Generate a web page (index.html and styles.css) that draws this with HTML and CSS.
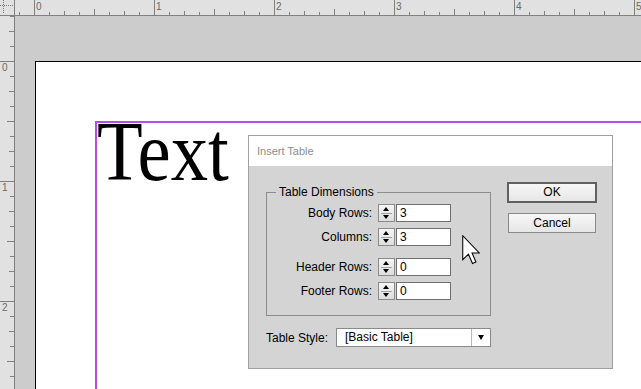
FILE: index.html
```html
<!DOCTYPE html>
<html>
<head>
<meta charset="UTF-8">
<title>Insert Table</title>
<link rel="stylesheet" href="styles.css">
</head>
<body>
  <div class="app">
    <div class="corner">
      <svg width="14" height="15" viewBox="0 0 14 15">
        <line x1="3.5" y1="0" x2="3.5" y2="14" stroke="#777" stroke-dasharray="1 1"/>
        <line x1="0" y1="5.5" x2="13" y2="5.5" stroke="#777" stroke-dasharray="1 1"/>
      </svg>
    </div>
    <div class="ruler ruler-top">
      <span>0</span><span>1</span><span>2</span><span>3</span><span>4</span><span>5</span>
    </div>
    <div class="ruler ruler-left">
      <span>0</span><span>1</span><span>2</span>
    </div>
    <div class="pasteboard">
      <div class="page">
        <div class="frame">
          <div class="frame-text">Text</div>
        </div>
      </div>
    </div>
  </div>

  <div class="dialog">
    <div class="dialog-title">Insert Table</div>
    <div class="dialog-body">
      <div class="left-col">
        <fieldset class="dims">
          <legend>Table Dimensions</legend>
          <div class="group">
            <div class="row">
              <label>Body Rows:</label>
              <span class="spin"></span>
              <span class="field">3</span>
            </div>
            <div class="row">
              <label>Columns:</label>
              <span class="spin"></span>
              <span class="field">3</span>
            </div>
          </div>
          <div class="group group-2">
            <div class="row">
              <label>Header Rows:</label>
              <span class="spin"></span>
              <span class="field">0</span>
            </div>
            <div class="row">
              <label>Footer Rows:</label>
              <span class="spin"></span>
              <span class="field">0</span>
            </div>
          </div>
        </fieldset>
        <div class="style-row">
          <label>Table Style:</label>
          <div class="select">
            <span class="select-value">[Basic Table]</span>
            <span class="select-arrow"></span>
          </div>
        </div>
      </div>
      <div class="buttons">
        <div class="btn btn-default">OK</div>
        <div class="btn">Cancel</div>
      </div>
    </div>
  </div>

  <svg class="cursor" width="18" height="30" viewBox="0 0 12 20">
    <polygon points="0.5,0.5 0.5,16.5 4.3,12.8 7,19 9.3,18 6.7,12 11.5,12" fill="#fff" stroke="#000" stroke-width="0.7" stroke-linejoin="miter"/>
  </svg>
</body>
</html>
```

FILE: styles.css
```css
body {
    margin: 0;
    width: 641px;
    height: 389px;
    overflow: hidden;
    font-family: "Liberation Sans", Arial, sans-serif;
    position: relative;
}

.app {
    display: grid;
    grid-template-columns: 15px 1fr;
    grid-template-rows: 16px 1fr;
    width: 641px;
    height: 389px;
}

.corner {
    background: #e1e1e1;
    border-right: 1px solid #808080;
    border-bottom: 1px solid #808080;
    box-sizing: border-box;
}
.corner svg {
    display: block;
}

.ruler {
    background-color: #e1e1e1;
    box-sizing: border-box;
    overflow: hidden;
    color: #6a6a6a;
    font-size: 10px;
    line-height: 12px;
}

/* ticks: 120px per inch, eighths every 15px */
.ruler-top {
    border-bottom: 1px solid #808080;
    display: flex;
    padding-left: 21px;
    background-image:
        linear-gradient(to right, #808080 0 1px, transparent 1px),
        linear-gradient(to right, transparent 60px, #808080 60px 61px, transparent 61px),
        linear-gradient(to right, #808080 0 1px, transparent 1px),
        linear-gradient(to right, #808080 0 1px, transparent 1px);
    background-size: 120px 100%, 120px 6px, 30px 4px, 15px 3px;
    background-position: 19px 0, 19px 100%, 19px 100%, 19px 100%;
    background-repeat: repeat-x;
}
.ruler-top span {
    flex: 0 0 120px;
    padding-top: 1px;
}

.ruler-left {
    border-right: 1px solid #808080;
    display: flex;
    flex-direction: column;
    padding-top: 46px;
    padding-left: 2px;
    background-image:
        linear-gradient(#808080 0 1px, transparent 1px),
        linear-gradient(transparent 60px, #808080 60px 61px, transparent 61px),
        linear-gradient(#808080 0 1px, transparent 1px),
        linear-gradient(#808080 0 1px, transparent 1px);
    background-size: 100% 120px, 7px 120px, 5px 30px, 4px 15px;
    background-position: 0 45px, 100% 45px, 100% 45px, 100% 45px;
    background-repeat: repeat-y;
}
.ruler-left span {
    flex: 0 0 120px;
}

.pasteboard {
    background: #cccccc;
    overflow: hidden;
    padding: 45px 0 0 20px;
}

.page {
    background: #fff;
    border: 1px solid #000;
    width: 700px;
    height: 500px;
    padding: 59px 0 0 59px;
    box-sizing: border-box;
}

.frame {
    border-left: 2px solid #b84ae6;
    border-top: 2px solid #b84ae6;
    height: 400px;
    width: 640px;
    box-sizing: border-box;
}

.frame-text {
    display: inline-block;
    font-family: "Liberation Serif", "Times New Roman", serif;
    font-size: 84px;
    line-height: 58px;
    color: #000;
    transform: scaleX(0.89);
    transform-origin: 0 0;
}

/* dialog */
.dialog {
    position: absolute;
    left: 248px;
    top: 135px;
    width: 365px;
    height: 234px;
    box-sizing: border-box;
    border: 1px solid #a0a0a0;
    background: #d4d4d4;
    font-size: 12px;
    color: #000;
}

.dialog-title {
    background: #fff;
    height: 30px;
    line-height: 30px;
    padding-left: 8px;
    font-size: 11px;
    color: #8e8e8e;
}

.dialog-body {
    display: flex;
    gap: 16px;
    padding: 16px 15px 0 17px;
}

.left-col {
    width: 225px;
}

.dims {
    margin: 3px 0 0;
    padding: 5px 0 15px 9px;
    border: 1px solid #8c8c8c;
    min-width: 0;
}
.dims legend {
    padding: 0 3px;
    line-height: 14px;
}

.group {
    display: flex;
    flex-direction: column;
    gap: 6px;
}
.group-2 {
    margin-top: 12px;
}

.row {
    display: flex;
    align-items: center;
    height: 18px;
}
.row label {
    width: 96px;
    text-align: right;
}

.spin {
    position: relative;
    width: 17px;
    height: 18px;
    margin-left: 6px;
    box-sizing: border-box;
    border: 1px solid #8a8a8a;
    background:
        linear-gradient(#a0a0a0, #a0a0a0) 2px 7.5px / 11px 1px no-repeat,
        linear-gradient(#f6f6f6, #dedede);
}
.spin::before,
.spin::after {
    content: "";
    position: absolute;
    left: 4px;
    border-left: 3.5px solid transparent;
    border-right: 3.5px solid transparent;
}
.spin::before {
    top: 2px;
    border-bottom: 4px solid #000;
}
.spin::after {
    bottom: 2px;
    border-top: 4px solid #000;
}

.field {
    width: 55px;
    height: 18px;
    margin-left: 1px;
    box-sizing: border-box;
    border: 1px solid #707070;
    background: #fff;
    padding-left: 3px;
    line-height: 16px;
}

.style-row {
    display: flex;
    align-items: center;
    justify-content: space-between;
    margin-top: 12px;
}

.select {
    display: flex;
    width: 155px;
    height: 19px;
    box-sizing: border-box;
    border: 1px solid #8a8a8a;
    background: #fff;
}
.select-value {
    flex: 1;
    padding-left: 8px;
    line-height: 17px;
}
.select-arrow {
    position: relative;
    width: 18px;
    border-left: 1px solid #b8b8b8;
}
.select-arrow::after {
    content: "";
    position: absolute;
    left: 6px;
    top: 6px;
    border-left: 3.5px solid transparent;
    border-right: 3.5px solid transparent;
    border-top: 5px solid #000;
}

.buttons {
    display: flex;
    flex-direction: column;
    align-items: center;
    gap: 10px;
    width: 90px;
}

.btn {
    width: 88px;
    height: 20px;
    box-sizing: border-box;
    border: 1px solid #8a8a8a;
    background: linear-gradient(#f7f7f7, #e6e6e6);
    text-align: center;
    line-height: 18px;
}
.btn-default {
    width: 90px;
    height: 21px;
    border: 2px solid #606060;
    line-height: 17px;
}

.cursor {
    position: absolute;
    left: 462px;
    top: 235px;
}
```
